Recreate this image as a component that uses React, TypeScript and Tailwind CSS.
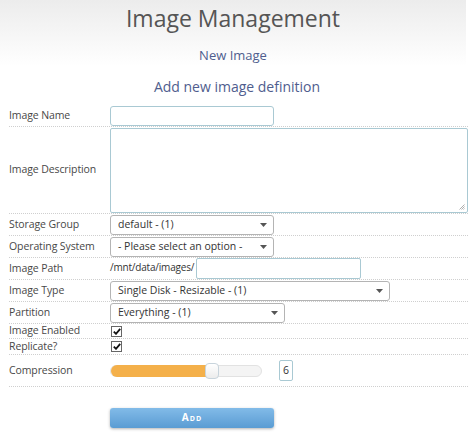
const font = "font-['Open_Sans',_'Noto_Sans',_sans-serif]";

function Caret() {
  return (
    <svg width="7" height="4" viewBox="0 0 7 4" className="shrink-0">
      <path d="M0 0h7L3.5 4z" fill="#555" />
    </svg>
  );
}

function Select({ value, width }: { value: string; width: string }) {
  return (
    <div
      className={`${width} flex h-[20px] items-center justify-between rounded-[3px] border border-[#b4b4b4] bg-white pl-[7px] pr-[6px] text-[10.5px] text-[#333]`}
    >
      <span>{value}</span>
      <Caret />
    </div>
  );
}

function Check() {
  return (
    <span className="flex h-[11px] w-[11px] items-center justify-center border border-[#666] bg-white">
      <svg width="8" height="7" viewBox="0 0 8 7">
        <path d="M0.8 3.6 L3 5.8 L7.2 0.8" fill="none" stroke="#111" strokeWidth="1.8" />
      </svg>
    </span>
  );
}

function Row({ label, children, className }: { label: string; children: React.ReactNode; className?: string }) {
  return (
    <div className={`flex items-center border-b border-dotted border-[#cfcfcf] ${className ?? ""}`}>
      <div className="w-[101px] shrink-0 text-[10.5px] tracking-[-0.1px] text-[#484848]">{label}</div>
      <div className="flex flex-1 items-center">{children}</div>
    </div>
  );
}

export default function App() {
  return (
    <div className={`h-[432px] w-[474px] overflow-hidden bg-white ${font}`}>
      <div className="mr-[8px] h-[66px] bg-gradient-to-b from-[#ececec] to-white pt-[1px] text-center">
        <h1 className="text-[23px] leading-[34px] text-[#555]">Image Management</h1>
        <h2 className="mt-[10px] text-[13px] leading-[20px] text-[#4f5d8e]">New Image</h2>
      </div>
      <h3 className="mt-[11px] text-center text-[14px] leading-[20px] text-[#4f5d8e]">Add new image definition</h3>

      <div className="mx-[9px] mr-[6px] mt-[8px]">
        <Row label="Image Name" className="h-[22px] pt-[1px]">
          <div className="h-[20px] w-[164px] rounded-[3px] border border-[#a9c9d3] bg-white" />
        </Row>
        <Row label="Image Description" className="h-[87px]">
          <div className="relative h-[85px] flex-1 rounded-[2px] border border-[#a9c9d3] bg-white">
            <svg width="6" height="6" viewBox="0 0 6 6" className="absolute bottom-[2px] right-[2px]">
              <path d="M5.5 0.5 L0.5 5.5 M5.5 2.5 L2.5 5.5 M5.5 4.5 L4.5 5.5" stroke="#999" strokeWidth="0.8" />
            </svg>
          </div>
        </Row>
        <Row label="Storage Group" className="h-[22px]">
          <Select value="default - (1)" width="w-[164px]" />
        </Row>
        <Row label="Operating System" className="h-[22px]">
          <Select value="- Please select an option -" width="w-[164px]" />
        </Row>
        <Row label="Image Path" className="h-[22px]">
          <span className="mr-[2px] self-start pt-[2px] text-[10px] tracking-[-0.2px] text-[#333]">/mnt/data/images/</span>
          <div className="h-[21px] w-[165px] rounded-[2px] border border-[#a9c9d3] bg-white" />
        </Row>
        <Row label="Image Type" className="h-[22px]">
          <Select value="Single Disk - Resizable - (1)" width="w-[280px]" />
        </Row>
        <Row label="Partition" className="h-[22px]">
          <Select value="Everything - (1)" width="w-[175px]" />
        </Row>
        <Row label="Image Enabled" className="h-[15px]">
          <span className="ml-[1px]"><Check /></span>
        </Row>
        <Row label="Replicate?" className="h-[16px]">
          <span className="ml-[1px]"><Check /></span>
        </Row>
        <Row label="Compression" className="h-[32px]">
          <div className="relative flex h-[12px] w-[152px] items-center rounded-full border border-[#e2e2e2] bg-[#f4f4f4]">
            <div className="h-[12px] w-[100px] rounded-l-full bg-[#f4b04a]" />
            <div className="absolute left-[94px] top-[-3px] h-[16px] w-[14px] rounded-[4px] border border-[#c8d4dc] bg-gradient-to-b from-white to-[#ececec]" />
          </div>
          <div className="ml-[17px] flex h-[21px] w-[14px] items-center justify-center rounded-[2px] border border-[#a9c9d3] text-[10.5px] text-[#333]">
            6
          </div>
        </Row>
      </div>

      <div className="ml-[110px] mt-[16px]">
        <button className="h-[20px] w-[164px] rounded-[3px] bg-gradient-to-b from-[#82bbe8] to-[#5a9cd3] text-[10px] font-bold tracking-[1px] text-white shadow-[0_1px_3px_rgba(0,0,0,0.3)] [font-variant:small-caps]">
          Add
        </button>
      </div>
    </div>
  );
}
